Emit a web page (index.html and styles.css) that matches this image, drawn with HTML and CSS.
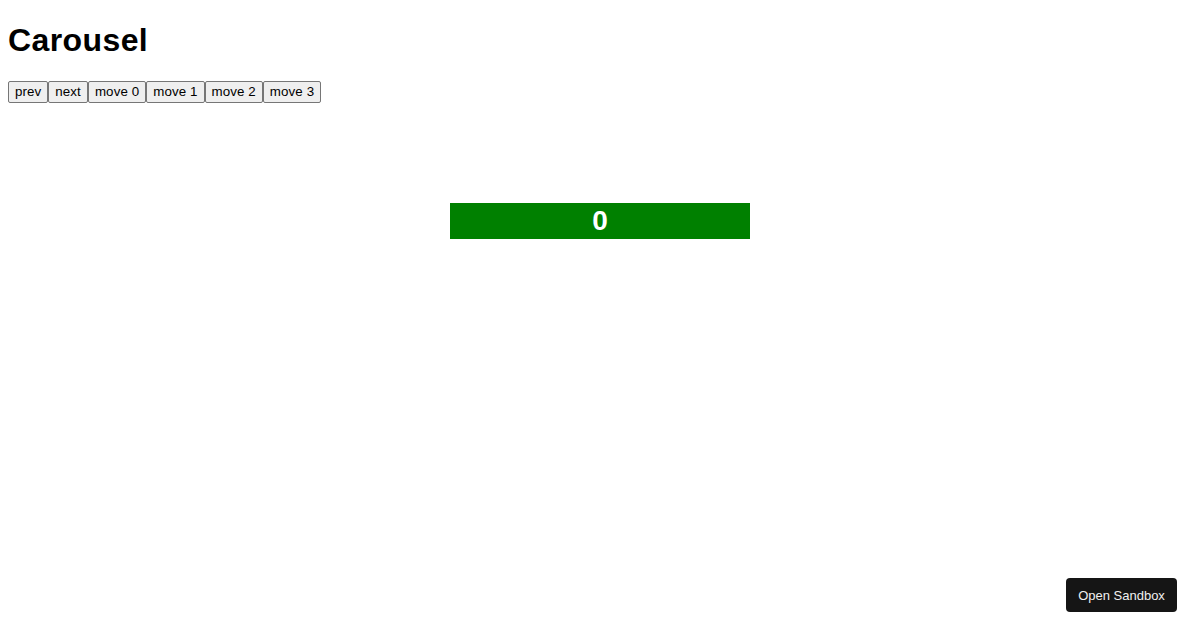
FILE: index.html
```html
<!DOCTYPE html>
<html>
<head>
<meta charset="utf-8">
<link rel="stylesheet" href="styles.css">
</head>
<body>
<h1 class="title">Carousel</h1>
<div class="controls"><button class="btn">prev</button><button class="btn">next</button><button class="btn">move 0</button><button class="btn">move 1</button><button class="btn">move 2</button><button class="btn">move 3</button></div>
<div class="viewport">
  <div class="slide">0</div>
</div>
<a class="sandbox">Open Sandbox</a>
</body>
</html>
```
FILE: styles.css
```css
body {
  margin: 8px;
  font-family: "Liberation Sans", Arial, sans-serif;
  background: #fff;
}
.title {
  font-size: 32px;
  font-weight: bold;
  letter-spacing: 0.4px;
  margin: 14.44px 0 21.44px;
}
.controls {
  display: flex;
}
.btn {
  font-family: "Liberation Sans", Arial, sans-serif;
  font-size: 13.33px;
  letter-spacing: 0.1px;
  height: 22px;
  padding: 1px 6px;
  background: #efefef;
  border: 1px solid #767676;
  border-radius: 2px;
  color: #000;
}
.viewport {
  width: 300px;
  margin: 100px auto 0;
}
.slide {
  background: #008000;
  color: #fff;
  height: 36px;
  line-height: 36px;
  text-align: center;
  font-size: 28px;
  font-weight: bold;
}
.sandbox {
  position: fixed;
  right: 23px;
  bottom: 18px;
  width: 111px;
  height: 34px;
  box-sizing: border-box;
  background: #151515;
  color: #f0f0f0;
  border-radius: 4px;
  font-size: 13px;
  display: flex;
  align-items: center;
  justify-content: center;
}
```
